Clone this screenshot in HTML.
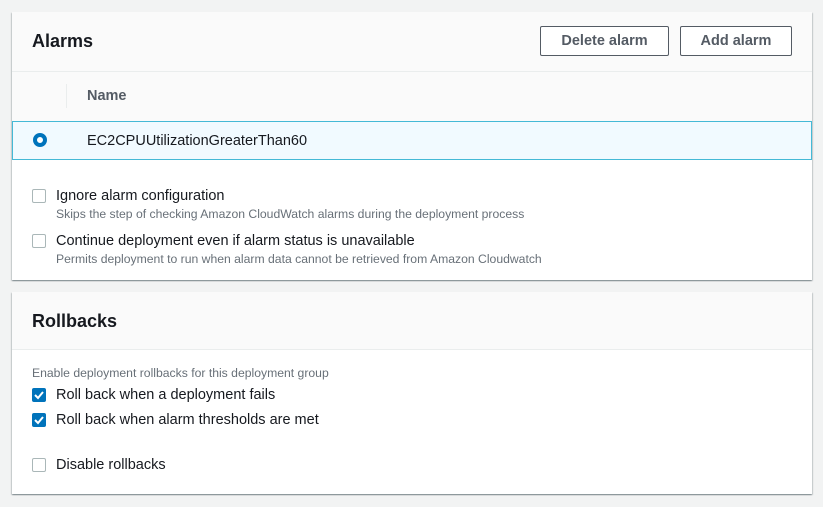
<!DOCTYPE html><html><head><style>
body{margin:0;background:#f2f3f3;width:823px;height:507px;font-family:"Liberation Sans",sans-serif;color:#16191f;position:relative;overflow:hidden}
.p{position:absolute;left:12px;width:800px;background:#fff;box-shadow:0 1px 1px rgba(0,28,36,.3),1px 1px 1px rgba(0,28,36,.15),-1px 1px 1px rgba(0,28,36,.15)}
.hd{position:absolute;left:0;width:800px;background:#fafafa;border-bottom:1px solid #eaeded}
h2{position:absolute;margin:0;font-size:18px;font-weight:bold;left:20px}
.b{position:absolute;top:14px;height:28px;border:1px solid #545b64;border-radius:2px;background:#fff;font-weight:bold;font-size:14.5px;color:#545b64;text-align:center;line-height:29px}
.t{position:absolute;font-size:14.5px;line-height:17px}
.d{position:absolute;font-size:12.2px;color:#687078;line-height:14px}
.cb{position:absolute;left:20px;width:12px;height:12px;border:1px solid #aab7b8;border-radius:2px;background:#fff}
.ck{position:absolute;left:20px;width:14px;height:14px;border-radius:2px;background:#0073bb}
</style></head><body>
<div class="p" style="top:12px;height:268px">
 <div class="hd" style="top:0;height:59px"><h2 style="top:19px">Alarms</h2>
  <div class="b" style="left:528px;width:127px">Delete alarm</div>
  <div class="b" style="left:668px;width:110px">Add alarm</div></div>
 <div class="hd" style="top:60px;height:49px;border:none"><div style="position:absolute;left:54px;top:12px;width:1px;height:24px;background:#eaeded"></div><div class="t" style="left:75px;top:16px;font-weight:bold;color:#545b64">Name</div></div>
 <div style="position:absolute;left:0;top:109px;width:798px;height:37px;background:#f1faff;border:1px solid #44b9d6">
  <div style="position:absolute;left:20px;top:11px;width:6px;height:6px;border:4px solid #0073bb;border-radius:50%;background:#fff"></div>
  <div class="t" style="left:74px;top:11px">EC2CPUUtilizationGreaterThan60</div></div>
 <div class="cb" style="top:177px"></div><div class="t" style="left:44px;top:176px">Ignore alarm configuration</div>
 <div class="d" style="left:44px;top:195px">Skips the step of checking Amazon CloudWatch alarms during the deployment process</div>
 <div class="cb" style="top:222px"></div><div class="t" style="left:44px;top:221px">Continue deployment even if alarm status is unavailable</div>
 <div class="d" style="left:44px;top:240px">Permits deployment to run when alarm data cannot be retrieved from Amazon Cloudwatch</div>
</div>
<div class="p" style="top:292px;height:202px">
 <div class="hd" style="top:0;height:57px"><h2 style="top:19px">Rollbacks</h2></div>
 <div class="d" style="left:20px;top:74px">Enable deployment rollbacks for this deployment group</div>
 <div class="ck" style="top:96px"><svg width="14" height="14"><path d="M3 7l3 3 5-6" stroke="#fff" stroke-width="2" fill="none"/></svg></div><div class="t" style="left:44px;top:95px">Roll back when a deployment fails</div>
 <div class="ck" style="top:121px"><svg width="14" height="14"><path d="M3 7l3 3 5-6" stroke="#fff" stroke-width="2" fill="none"/></svg></div><div class="t" style="left:44px;top:120px">Roll back when alarm thresholds are met</div>
 <div class="cb" style="top:166px"></div><div class="t" style="left:44px;top:165px">Disable rollbacks</div>
</div>
</body></html>
